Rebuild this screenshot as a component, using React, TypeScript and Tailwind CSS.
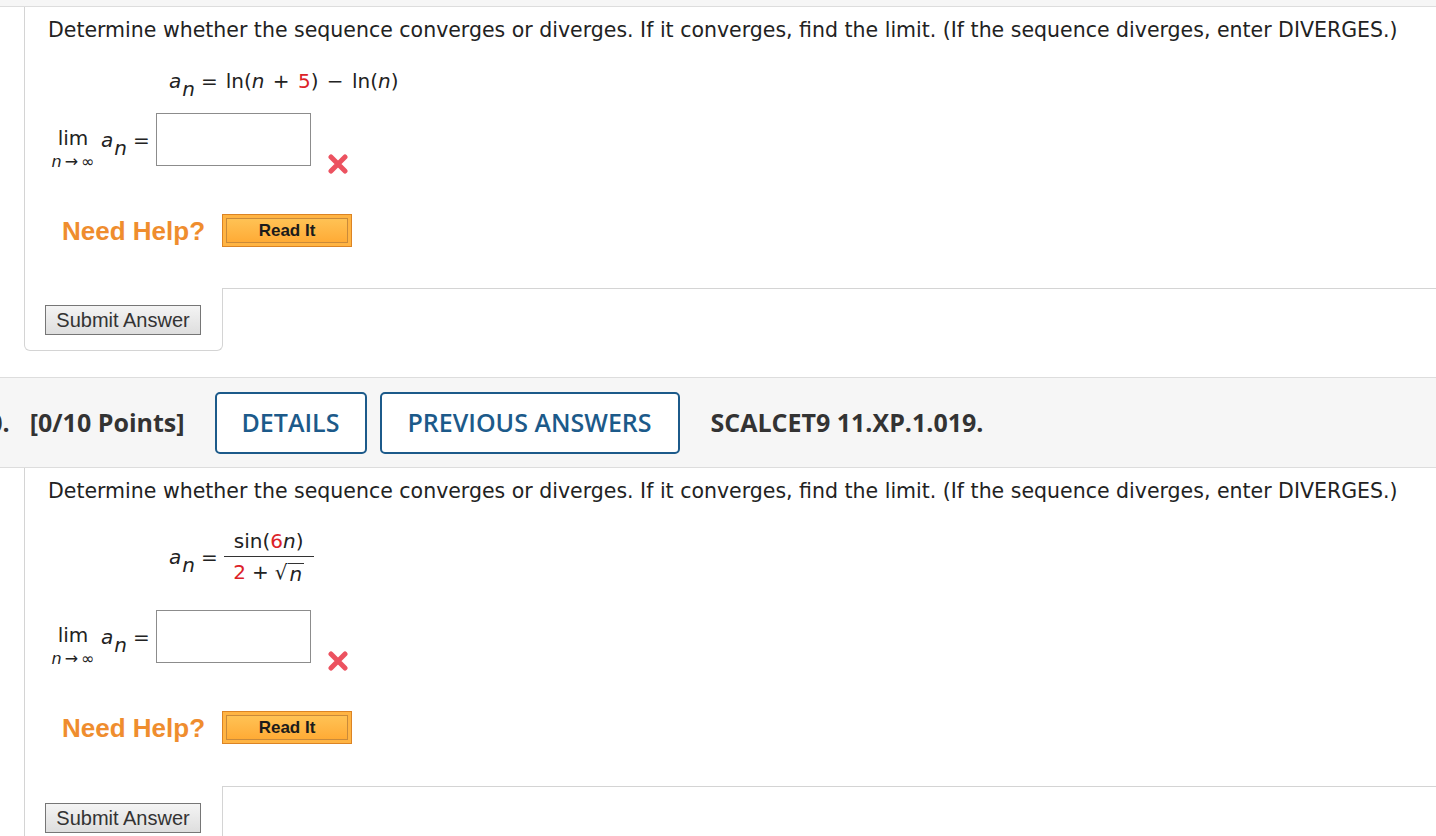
import React from 'react';

const mathFont = { fontFamily: '"DejaVu Sans", Verdana, sans-serif' };
const arial = { fontFamily: '"Liberation Sans", Arial, sans-serif' };

const RedX: React.FC = () => (
    <svg width="22" height="20" viewBox="0 0 22 20" className="block">
        <path d="M4 3 L18 17 M18 3 L4 17" stroke="#ec5260" strokeWidth="5" strokeLinecap="round" />
    </svg>
);

const LimitRow: React.FC = () => (
    <div className="flex h-[60px] items-start">
        <div className="flex flex-col items-center mt-[14px] w-[50px]">
            <span className="text-[20px] leading-[22px] text-[#222]">lim</span>
            <span className="text-[16px] leading-[16px] text-[#222] mt-[5px] whitespace-nowrap">
                <span className="italic">n</span>
                <span className="ml-[3px]">→</span>
                <span className="ml-[3px]">∞</span>
            </span>
        </div>
        <div className="mt-[16px] ml-[3px] text-[20px] leading-[22px] text-[#222] whitespace-nowrap">
            <span className="italic">a</span>
            <span className="italic relative top-[8px] ml-[1px]">n</span>
            <span className="ml-[6px]">=</span>
        </div>
        <div className="ml-[6px] w-[155px] h-[53px] border border-[#8c8c8c] bg-white" />
        <div className="ml-[16px] mt-[41px]">
            <RedX />
        </div>
    </div>
);

const HelpRow: React.FC = () => (
    <div className="flex items-center h-[33px] ml-[14px]">
        <span className="text-[26px] font-bold text-[#ef8d2e] leading-none" style={arial}>
            Need Help?
        </span>
        <div className="ml-[17px] w-[130px] h-[33px] p-[3px] bg-[#ffb443] border border-[#dc8424]">
            <div className="w-full h-full flex items-center justify-center border border-[#c98a3a] bg-gradient-to-b from-[#ffc254] to-[#ffab35]">
                <span className="text-[17px] font-bold text-[#1b1b1b]" style={arial}>
                    Read It
                </span>
            </div>
        </div>
    </div>
);

const SubmitSection: React.FC = () => (
    <div className="flex">
        <div className="w-[199px] h-[63px] border-l border-r border-b border-[#d4d4d4] rounded-b-[6px] pl-[20px] pt-[17px]">
            <button
                className="w-[156px] h-[30px] border border-[#767676] bg-gradient-to-b from-[#f4f4f4] to-[#dedede] text-[20px] text-[#333] leading-none"
                style={arial}
            >
                Submit Answer
            </button>
        </div>
        <div className="flex-1 border-t border-[#d4d4d4]" />
    </div>
);

const QUESTION = 'Determine whether the sequence converges or diverges. If it converges, find the limit. (If the sequence diverges, enter DIVERGES.)';

const Subscripted: React.FC = () => (
    <>
        <span className="italic">a</span>
        <span className="italic relative top-[8px] ml-[1px]">n</span>
        <span className="ml-[6px]">=</span>
    </>
);

export default function App() {
    return (
        <div className="w-[1436px] h-[836px] bg-white overflow-hidden" style={mathFont}>
            {/* top strip */}
            <div className="h-[7px] bg-[#f6f6f6] border-b border-[#dddddd]" />

            {/* Question 9 body */}
            <div className="ml-[24px]">
                <div className="border-l border-[#d4d4d4] pl-[23px] pt-[11px] h-[281px]">
                    <p className="text-[20.5px] leading-[24px] text-[#222] whitespace-nowrap">{QUESTION}</p>
                    <div className="mt-[24px] h-[30px] ml-[121px] flex items-center text-[20px] text-[#222] whitespace-nowrap">
                        <Subscripted />
                        <span className="ml-[8px] [word-spacing:2px]">
                            ln(<span className="italic">n</span> + <span className="text-[#dc2228]">5</span>) − ln(<span className="italic">n</span>)
                        </span>
                    </div>
                    <div className="mt-[17px]">
                        <LimitRow />
                    </div>
                    <div className="mt-[41px]">
                        <HelpRow />
                    </div>
                </div>
                <SubmitSection />
            </div>

            {/* Question 10 header */}
            <div className="mt-[26px] h-[91px] bg-[#f6f6f6] border-t border-b border-[#dddddd] flex items-center text-[#333] whitespace-nowrap" style={{ fontFamily: '"Open Sans", sans-serif' }}>
                <span className="text-[25px] font-bold ml-[-26px]">10.</span>
                <span className="text-[25px] font-bold ml-[20px]">[0/10 Points]</span>
                <button className="ml-[30px] w-[152px] h-[62px] border-2 border-[#1c5a8a] rounded-[5px] text-[25px] font-semibold text-[#1c5a8a] bg-white">
                    DETAILS
                </button>
                <button className="ml-[13px] w-[300px] h-[62px] border-2 border-[#1c5a8a] rounded-[5px] text-[25px] font-semibold text-[#1c5a8a] bg-white">
                    PREVIOUS ANSWERS
                </button>
                <span className="ml-[31px] text-[25px] font-bold">SCALCET9 11.XP.1.019.</span>
            </div>

            {/* Question 10 body */}
            <div className="ml-[24px]">
                <div className="border-l border-[#d4d4d4] pl-[23px] pt-[11px] h-[318px]">
                    <p className="text-[20.5px] leading-[24px] text-[#222] whitespace-nowrap">{QUESTION}</p>
                    <div className="mt-[25px] h-[58px] ml-[121px] flex items-center text-[20px] text-[#222] whitespace-nowrap">
                        <Subscripted />
                        <div className="ml-[6px] flex flex-col items-center">
                            <span className="leading-[23px] px-[6px]">sin(<span className="text-[#dc2228]">6</span><span className="italic">n</span>)</span>
                            <div className="w-[90px] h-px bg-[#333] my-[3px]" />
                            <span className="leading-[24px] flex items-end">
                                <span className="text-[#dc2228]">2</span>
                                <span className="ml-[6px]">+</span>
                                <span className="ml-[6px]">√</span>
                                <span className="italic border-t border-[#333] px-[2px] leading-[20px]">n</span>
                            </span>
                        </div>
                    </div>
                    <div className="mt-[24px]">
                        <LimitRow />
                    </div>
                    <div className="mt-[41px]">
                        <HelpRow />
                    </div>
                </div>
                <SubmitSection />
            </div>
        </div>
    );
}
